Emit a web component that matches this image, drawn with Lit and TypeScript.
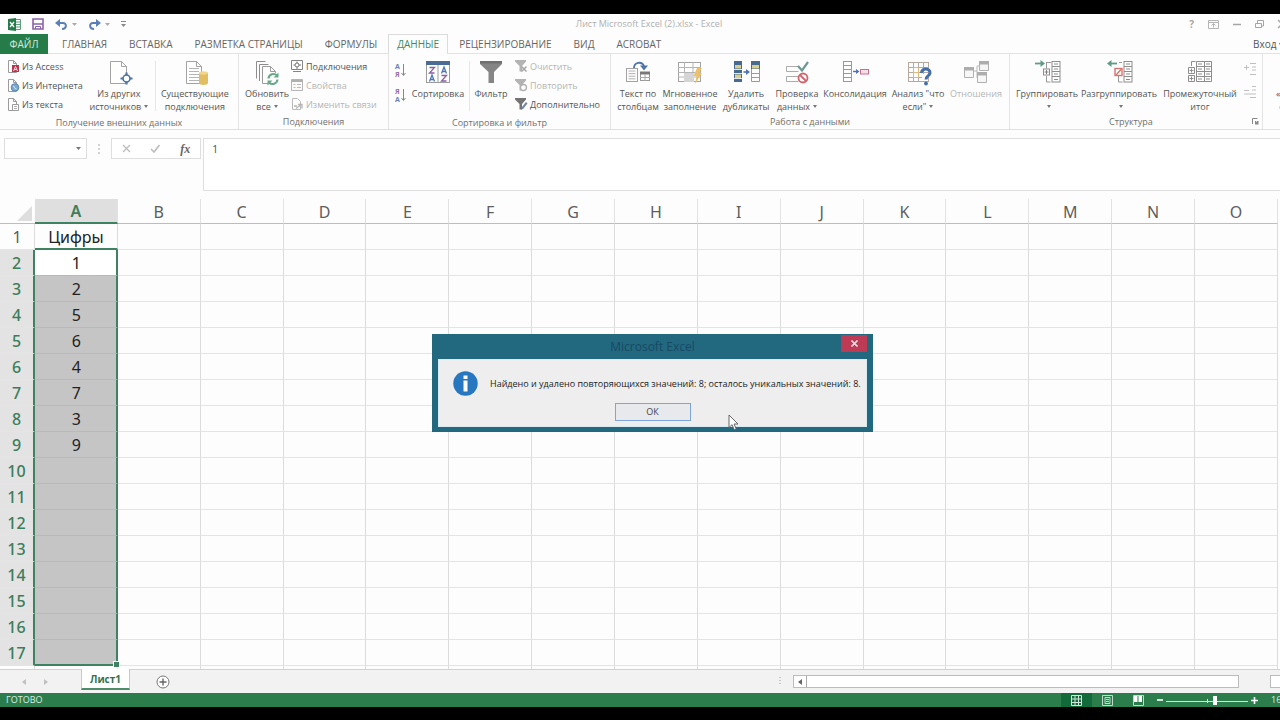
import { LitElement, html, css, svg, nothing } from "lit";
import { customElement, property } from "lit/decorators.js";
import { classMap } from "lit/directives/class-map.js";

const sheetLines = (x: number, y: number, w: number, n: number, step: number, color = "#8a8a8a") =>
  Array.from({ length: n }, (_, i) => svg`<path d="M${x} ${y + i * step}h${w}" stroke=${color}/>`);

const bigIcons: Record<string, unknown> = {
  other: svg`<path d="M3.500 .5h11l5 5v17h-16z M14.500 .5v5h5" fill="#fff" stroke="#a3a3a3"/><circle cx="19.500" cy="17.500" r="3.500" fill="#fff" stroke="#4f74a8" stroke-width="1.6"/>
    <path d="M19.500 11.500v3M19.500 20.500v3M13.500 17.500h3M22.500 17.500h3" stroke="#4f74a8" stroke-width="2.200"/>`,
  existing: svg`<path d="M3.500 .5h10l5 5v17h-15z M13.500 .5v5h5" fill="#fff" stroke="#a3a3a3"/>
    ${sheetLines(6, 7.5, 10, 5, 3, "#b5b5b5")}
    <path d="M16 12v10c0 2.600 9 2.600 9 0V12z" fill="#e3bd62"/><ellipse cx="20.500" cy="12" rx="4.500" ry="1.700" fill="#f2d68c"/>`,
  refresh: svg`<path d="M1.500 17.500V.5h9M4.500 20V3.500h9" fill="none" stroke="#8d8d8d"/>
    <path d="M7.500 5.500h8l5 5v12h-13z M15.500 5.500v5h5" fill="#fff" stroke="#9b9b9b"/>
    <circle cx="18" cy="18" r="6.500" fill="#fff"/>
    <path d="M13.500 17.500a5 5 0 0 1 8.500-3M22.500 18.500a5 5 0 0 1-8.500 3" fill="none" stroke="#69a98a" stroke-width="2.200"/>
    <path d="M23.500 11.500v5h-5zM12.500 24.500v-5h5z" fill="#69a98a"/>`,
  sort: svg`<rect x=".5" y="1" width="23" height="20.500" fill="#fff" stroke="#9c9c9c"/>
    <path d="M0 0h24v4H0z" fill="#4a6c94"/><path d="M12 4v17" stroke="#9c9c9c"/>
    <path d="M3.500 6.500h5l-5 5.500h5M15.500 14.500h5l-5 5.500h5" fill="none" stroke="#8a5fa8" stroke-width="1.300"/>
    <path d="M3.500 20.500l2.500-6.500 2.500 6.500M4.500 18.500h3M15.500 12.500l2.500-6.500 2.500 6.500M16.500 10.500h3" fill="none" stroke="#4f74b5" stroke-width="1.300"/>`,
  filter: svg`<path d="M1 0h22v3l-8 8v11H9.500V11L1 3z" fill="#858585"/><path d="M1 0h22v2.500H1z" fill="#707070"/>`,
  columns: svg`<path d="M8 7c0-6 8-7 10-2" fill="none" stroke="#4f74a8" stroke-width="1.800"/><path d="M14 4.500h8l-4 5z" fill="#4f74a8"/>
    <rect x=".5" y="7.500" width="11" height="13" fill="#fff" stroke="#a3a3a3"/>${sheetLines(2.500, 10, 7, 4, 2.600, "#b0b0b0")}
    <rect x="14.500" y="11.500" width="9" height="8" fill="#fff" stroke="#9a9a9a"/><path d="M14 10.500h10v3H14z" fill="#7a7a7a"/><path d="M14 16.500h10M19 13v7" stroke="#a8a8a8"/>`,
  flash: svg`<rect x=".5" y="1.500" width="22" height="19" fill="#fff" stroke="#a3a3a3"/>
    <path d="M0 6.500h23M0 11.500h23M0 16h23M6.500 1v20M15 1v20" stroke="#b5b5b5"/><path d="M6 12h10v9H6z" fill="#d5d5d5"/>
    <path d="M19 7h5l-3 5h3l-7 11 1.500-8H15.500z" fill="#edc069"/>`,
  duplicates: svg`<path d="M0 0h8v21H0zM17 0h9v8h-9z" fill="#486a8e"/><path d="M1 4h6v3.500H1zM1 13.500h6v4H1zM18 4h7v3.500h-7z" fill="#d8cf8a"/>
    <path d="M0 8.500h8M0 12.500h8M0 17.500h8" stroke="#dfe6ee"/>
    <path d="M17.500 8v12.500h8V8M17.500 12.500h8M17.500 16.500h8" fill="none" stroke="#9a9a9a"/>
    <path d="M9.500 11h3" stroke="#4f74b5" stroke-width="1.600"/><path d="M12 8l4 3-4 3z" fill="#4f74b5"/>`,
  validation: svg`<path d="M13 5.500H1.500v5h12M13 15.500H1.500v5h12" fill="none" stroke="#ababab"/>
    <path d="M13 5l4 4.500L23 1" fill="none" stroke="#6b9a90" stroke-width="2.200"/>
    <circle cx="18" cy="17" r="4.500" fill="#fff" stroke="#d0646c" stroke-width="1.800"/><path d="M15 14l6 6" stroke="#d0646c" stroke-width="1.800"/>`,
  consolidate: svg`<rect x=".5" y=".5" width="8" height="20" fill="#fff" stroke="#999"/><path d="M0 4.500h9M0 8.500h9M0 12.500h9M0 16.500h9" stroke="#999"/>
    <path d="M10 10.500h4" stroke="#4f74b5" stroke-width="1.400"/><path d="M13 8l3.500 2.500L13 13z" fill="#4f74b5"/>
    <rect x="17.500" y="8.500" width="8" height="4.500" fill="#f8dfe6" stroke="#c8718c"/>`,
  whatif: svg`<rect x="2.500" y="1.500" width="20" height="19" fill="#fff" stroke="#b9a79b"/>
    <path d="M2 6.500h21M2 11.500h21M2 16.500h14M7.500 1v20M12.500 1v20M17.500 1v12" stroke="#b3aaa4"/>
    <path d="M7.500 6.500h5v5h-5zM7.500 11.500h5v5h-5z" fill="none" stroke="#e6b878"/>
    <path d="M15.500 12c0-5.500 9-5 8.500 0-.5 3-4 3-4 6.500" fill="none" stroke="#456fa8" stroke-width="3"/><circle cx="20" cy="22.500" r="1.900" fill="#456fa8"/>`,
  relations: svg`<path d="M9 10h4V5h3M13 10v7h3" fill="none" stroke="#b9b9b9"/>
    <path d="M.5 7.500h9v9h-9zM15.500 1.500h9v8h-9zM13.500 12.500h9v9h-9z" fill="#f6f6f6" stroke="#b0b0b0"/>
    <path d="M0 6h10v3.500H0zM15 0h10v3.500H15zM13 11h10v3.500H13z" fill="#adadad"/>`,
  group: svg`<path d="M0 2.500h7" stroke="#5f9c84" stroke-width="1.800"/><path d="M5.500-1l4.500 3.500L5.500 6z" fill="#5f9c84"/>
    <path d="M11 1.500h5M11.500 1.500v6M11.500 15v6h4" fill="none" stroke="#999"/><rect x="8.500" y="8" width="6" height="6" fill="#fff" stroke="#8d8d8d"/><path d="M9.500 11h4M11.500 9v4" stroke="#7d7d7d"/>
    <rect x="17" y=".5" width="8" height="20.500" fill="#fff" stroke="#8d8d8d"/><path d="M17 5.500h8M17 10.500h8M17 15.500h8M19 3h4M19 8h4M19 13h4M19 18.500h4" stroke="#8d8d8d"/>`,
  ungroup: svg`<path d="M3 2.500h7" stroke="#5f9c84" stroke-width="1.800"/><path d="M4.500-1L0 2.500 4.500 6z" fill="#5f9c84"/>
    <path d="M12 1.500h3M11.500 15v6h4" fill="none" stroke="#999"/><rect x="8" y="7.500" width="7" height="7" fill="#fff" stroke="#d8756f" stroke-width="1.400"/><path d="M9 14l5.500-6" stroke="#d8756f" stroke-width="1.400"/>
    <rect x="17" y=".5" width="8" height="20.500" fill="#fff" stroke="#8d8d8d"/><path d="M17 5.500h8M17 10.500h8M17 15.500h8M19 3h4M19 8h4M19 13h4M19 18.500h4" stroke="#8d8d8d"/>`,
  subtotal: svg`<path d="M3.500 5V.5h4M.5 6.500h6v6h-6zM.5 14.500h6v6h-6zM1.500 9.500h4M3.500 7.500v4M1.500 17.500h4M3.500 15.500v4" fill="none" stroke="#8d8d8d"/>
    <path d="M8.500 .5h15v20h-15zM8.500 5.500h15M8.500 10.500h15M8.500 15.500h15M16.500 .5v20M10 3h4M18 3h4M10 8h4M18 8h4M10 13h4M18 13h4M10 18h4M18 18h4" fill="none" stroke="#8d8d8d"/>`,
  clipped: nothing,
};

const smallPage = svg`<path d="M1.500 .5h5l3 3v9h-8z M6.500 .5v3h3" fill="#fff" stroke="#9b9b9b"/>`;
const funnel = (c: string) => svg`<path d="M0 0h11v1.500L7 6v5.500H4.500V6L0 1.500z" fill=${c}/>`;
const smallIcons: Record<string, unknown> = {
  access: svg`${smallPage}<path d="M5 5h7v7H5z" fill="#b5384f"/><path d="M6.500 11L8.500 6.500 10.500 11M7.500 9.500h2" fill="none" stroke="#fff" stroke-width=".8"/>`,
  web: svg`${smallPage}<circle cx="8" cy="8.500" r="3.800" fill="#7fa9cf" stroke="#5585b5"/><path d="M6 7c2 0 1 3 3.500 3" stroke="#e8f2ea" fill="none"/>`,
  text: svg`${smallPage}<path d="M5.500 6.500h6v6h-6z" fill="#fff" stroke="#9b9b9b"/><path d="M7 8.500h3M7 10.500h3" stroke="#9b9b9b" stroke-width=".8"/>`,
  connections: svg`<path d="M.5 .5h11v9H.5z" fill="#fff" stroke="#858585"/><path d="M2 11.500h8" stroke="#858585"/><circle cx="6" cy="5" r="2" fill="none" stroke="#777"/><path d="M6 1.500v1.500M6 7v2M2.500 5H4M8 5h2" stroke="#777"/>`,
  properties: svg`<path d="M.5 .5h11v11H.5z" fill="#fafafa" stroke="#b5b5b5"/><path d="M0 2h12" stroke="#b0b0b0" stroke-width="2"/><path d="M2.500 5.500h2M6 5.500h4M2.500 8.500h2M6 8.500h4" stroke="#bbb"/>`,
  links: svg`<path d="M1.500 .5h5l3 3v8h-8z" fill="#fff" stroke="#bbb"/><path d="M3 8h3M5 10.500l4-3M7 6.500h4v4" stroke="#b5b5b5" stroke-width="1.300" fill="none"/>`,
  clear: svg`${funnel("#b3b3b3")}<path d="M6.500 6.500l5 5M11.500 6.500l-5 5" stroke="#a5a5a5" stroke-width="1.500"/>`,
  reapply: svg`${funnel("#b3b3b3")}<circle cx="8.500" cy="8.500" r="3" fill="#fdfdfd" stroke="#b0b0b0" stroke-width="1.300"/>`,
  advanced: svg`${funnel("#747474")}<path d="M6 12l1-3 4-5 1.500 1.500-4 5z" fill="#7484a3"/>`,
};

@customElement("big-command")
export class BigCommand extends LitElement {
  static styles = css`
    :host { display: block; flex: none; }
    button { display: flex; flex-direction: column; align-items: center; width: 100%; padding: 4px 0 0; border: 0; background: none;
      font: 9px/13px "Open Sans", sans-serif; color: #555; white-space: nowrap; }
    button:disabled { color: #b5b5b5; }
    svg { display: block; width: 26px; height: 26px; overflow: visible; }
    .lines { display: flex; flex-direction: column; align-items: center; }
    .arrow { display: inline-block; margin-left: 3px; vertical-align: 2px; border: 2px solid transparent; border-top: 3px solid #777; border-bottom: 0; }
  `;
  @property() icon = "";
  @property({ type: Array }) lines: string[] = [];
  @property({ type: Boolean }) menu = false;
  @property({ type: Boolean }) off = false;
  render() {
    const last = this.lines.length - 1;
    return html`<button ?disabled=${this.off}>
      <svg viewBox="-1 0 26 26" aria-hidden="true">${bigIcons[this.icon]}</svg>
      <span class="lines">${this.lines.map((t, i) => html`<span>${t}${this.menu && i === last ? html`<i class="arrow"></i>` : nothing}</span>`)}</span>
    </button>`;
  }
}

@customElement("small-command")
export class SmallCommand extends LitElement {
  static styles = css`
    :host { display: block; }
    button { display: flex; align-items: center; gap: 2px; height: 19px; padding: 0; border: 0; background: none;
      font: 9px/19px "Open Sans", sans-serif; color: #555; white-space: nowrap; }
    button:disabled { color: #b5b5b5; }
    svg { width: 13px; height: 13px; flex: none; }
  `;
  @property() icon = "";
  @property() label = "";
  @property({ type: Boolean }) off = false;
  render() {
    return html`<button ?disabled=${this.off}><svg viewBox="0 0 13 13" aria-hidden="true">${smallIcons[this.icon]}</svg>${this.label}</button>`;
  }
}

const COLUMNS = "ABCDEFGHIJKLMNO".split("");
const VALUES = ["Цифры", "1", "2", "5", "6", "4", "7", "3", "9"];
const TABS = ["ГЛАВНАЯ", "ВСТАВКА", "РАЗМЕТКА СТРАНИЦЫ", "ФОРМУЛЫ", "ДАННЫЕ", "РЕЦЕНЗИРОВАНИЕ", "ВИД", "ACROBAT"];

@customElement("app-root")
export class AppRoot extends LitElement {
  static styles = css`
    :host { display: block; font: 9px/14px "Open Sans", sans-serif; color: #5c5c5c; }
    * { box-sizing: border-box; }
    button, input { font: inherit; color: inherit; }
    button { padding: 0; border: 0; background: none; }
    svg { display: block; overflow: visible; }
    .screen { display: flex; flex-direction: column; min-height: 100vh; border-top: 14px solid #000; border-bottom: 13px solid #000; background: #fdfdfd; overflow: hidden; position: relative; }

    .titlebar { display: grid; grid-template-columns: 1fr auto 1fr; align-items: center; height: 20px; padding-left: 8px; }
    .quick { display: flex; align-items: center; gap: 11px; }
    .quick .history { display: flex; align-items: center; gap: 4px; }
    .caption { color: #b0b0b0; padding-left: 10px; }
    .window { display: flex; justify-content: flex-end; align-items: center; gap: 14px; color: #a5a5a5; font-size: 10px; margin-right: -6px; }

    .tabs { display: flex; height: 20px; border-bottom: 1px solid #e3e3e3; }
    .tab { height: 20px; padding: 0 11px; font-size: 10px; line-height: 20px; color: #666; white-space: nowrap; }
    .file { width: 48px; padding: 0; margin-right: 3px; background: #257c49; color: #d5e8dc; }
    .active { padding: 0 8px; border: 1px solid #dcdcdc; border-bottom: 0; background: #fdfdfd; color: #3f8a62; line-height: 19px; }
    .signin { margin-left: auto; margin-right: -4px; font-size: 10px; line-height: 20px; color: #555; white-space: nowrap; }

    .ribbon { display: flex; height: 76px; border-bottom: 1px solid #e0e0e0; overflow: hidden; }
    .group { display: flex; flex-direction: column; flex: none; border-right: 1px solid #e4e4e4; }
    .body { display: flex; flex: 1; padding: 3px 0 0 4px; }
    .name { display: flex; justify-content: center; height: 15px; line-height: 15px; color: #707070; }
    .name .launcher { margin-left: auto; padding-right: 3px; }
    .name.wide { padding-left: 99px; }
    .g-external { width: 239px; } .g-links { width: 150px; } .g-sort { width: 222px; } .g-tools { width: 399px; } .g-outline { width: 253px; } .g-more { border: 0; }
    .stack { padding-left: 3px; flex: none; }
    .stack.tight { padding-left: 0; }
    .rule { width: 1px; height: 50px; background: #e6e6e6; margin: 4px 0; }
    .order { display: flex; flex-direction: column; gap: 11px; padding: 6px 0 0 2px; }
    .w42 { width: 42px; } .w46 { width: 46px; } .w48 { width: 48px; } .w54 { width: 54px; } .w58 { width: 58px; } .w62 { width: 62px; } .w66 { width: 66px; } .w68 { width: 68px; } .w72 { width: 72px; } .w78 { width: 78px; } .w84 { width: 84px; }

    .formula { display: flex; align-items: flex-start; height: 69px; padding: 8px 0 0 4px; }
    .namebox { display: flex; align-items: center; width: 83px; height: 21px; border: 1px solid #dedede; background: #fff; }
    .namebox input { flex: 1; min-width: 0; border: 0; outline: 0; background: none; padding: 0 4px; }
    .namebox button { width: 16px; height: 19px; display: grid; place-items: center; }
    .grip { width: 24px; display: grid; place-items: center; height: 21px; }
    .fx { display: flex; justify-content: space-around; align-items: center; width: 90px; height: 21px; margin-right: 2px; border: 1px solid #dedede; background: #fff; }
    .fxmark { font: italic bold 12px/18px "Liberation Serif", serif; color: #666; }
    .entry { flex: 1; min-width: 0; height: 53px; padding: 3px 8px; border: 1px solid #dedede; border-right: 0; border-radius: 0; outline: 0; resize: none; background: #fff; font: 11px/14px "Open Sans", sans-serif; color: #555; display: block; overflow: hidden; }

    .sheet { flex: 1; padding-right: 2px; position: relative; overflow: hidden; }
    table { width: 100%; table-layout: fixed; border-collapse: separate; border-spacing: 0; font: 16px/22px "Noto Sans", sans-serif; color: #222; }
    th, td { height: 26px; padding: 1px 0 0; border-right: 1px solid #dcdcdc; border-bottom: 1px solid #e4e4e4; text-align: center; overflow: hidden; }
    th { font-weight: 400; color: #5e5e5e; }
    thead th { height: 25px; font-size: 16px; line-height: 22px; border-bottom: 1px solid #bdbdbd; border-right-color: #e2e2e2; }
    .corner { width: 35px; border-right: 0; }
    .corner svg { margin: 4px 0 0 16px; }
    thead th.on { background: #dfdfdf; color: #3c7d5b; font-weight: 600; border-bottom: 2px solid #3f8261; }
    tbody th.on { background: #e3e3e3; color: #3c7d5b; font-weight: 500; border-right: 2px solid #3f8261; }
    td.above { border-bottom: 2px solid #3f8261; }
    td.pick { padding-left: 2px; border-right: 2px solid #3f8261; background: #c5c5c5; border-bottom-color: #b9b9b9; }
    td.pick.cursor { background: #fff; }
    td.pick.end { border-bottom: 2px solid #3f8261; position: relative; overflow: visible; }
    .handle { position: absolute; right: -3px; bottom: -3px; width: 5px; height: 5px; background: #3f8261; outline: 1px solid #fdfdfd; }
    .rest td, .rest th { height: 3px; padding: 0; border-bottom: 0; line-height: 0; }

    .sheets { display: flex; height: 24px; background: #f2f2f2; border-top: 1px solid #d2d2d2; align-items: center; }
    .nav { display: flex; gap: 18px; width: 81px; padding-left: 22px; }
    .sheettab { align-self: flex-start; width: 49px; height: 21px; margin-top: -1px; background: #fff; border: 1px solid #c9c9c9; border-top: 0; border-bottom: 2px solid #4e8b69; color: #2f7350; font-size: 10px; font-weight: 700; line-height: 20px; }
    .add { margin-left: 26px; }
    .hscroll { display: flex; align-items: center; margin-left: auto; width: 501px; height: 23px; }
    .thumbbar { display: flex; flex: 1; height: 13px; margin-left: 12px; border: 1px solid #bcbcbc; background: #fff; }
    .thumbbar button { width: 13px; border-right: 1px solid #aaa; display: grid; place-items: center; }
    .vend { width: 10px; height: 13px; margin-left: 31px; border: 1px solid #bcbcbc; border-right: 0; background: #fff; }

    .status { display: flex; align-items: center; height: 14px; background: #2b7d4c; color: #dcece2; padding-left: 6px; }
    .status .views { display: flex; margin-left: auto; }
    .view { display: grid; place-items: center; width: 31px; height: 14px; }
    .view.on { background: #12693a; }
    .zoom { display: flex; align-items: center; gap: 3px; padding-left: 3px; }
    .zoom input { appearance: none; width: 82px; height: 13px; margin: 0; background: linear-gradient(#cfe3d7, #cfe3d7) 41px 5px / 1px 4px no-repeat, linear-gradient(#cfe3d7, #cfe3d7) 0 7px / 100% 1px no-repeat; }
    .zoom input::-webkit-slider-thumb { appearance: none; width: 4px; height: 9px; background: #fff; }
    .percent { flex: none; width: 22px; padding-left: 13px; overflow: hidden; white-space: nowrap; }

    .dialog { position: absolute; left: 432px; top: 320px; width: 441px; padding: 0 6px 5px; background: #22687f; border: 0; }
    .dtitle { display: grid; grid-template-columns: 1fr auto 1fr; height: 25px; color: #174a63; font: 12px/25px "Open Sans", sans-serif; }
    .dtitle strong { grid-column: 2; font-weight: 400; }
    .close { justify-self: end; width: 26px; height: 17px; margin-top: 1px; background: #bd3b55; display: grid; place-items: center; }
    .message { display: flex; flex-direction: column; align-items: center; height: 68px; background: #eeeeee; border: 1px solid #d9eaf2; }
    .line { display: flex; align-items: center; align-self: stretch; gap: 12px; height: 43px; padding: 4px 0 0 14px; color: #222; white-space: nowrap; }
    .ok { width: 76px; height: 18px; border: 1px solid #7fa6d6; background: #e8e9ed; color: #444; line-height: 16px; }
    .pointer { position: absolute; left: 296px; top: 80px; }
  `;

  big(width: string, icon: string, lines: string[], menu = false, off = false) {
    return html`<big-command class=${width} .icon=${icon} .lines=${lines} .menu=${menu} .off=${off}></big-command>`;
  }
  small(icon: string, label: string, off = false) {
    return html`<small-command .icon=${icon} .label=${label} .off=${off}></small-command>`;
  }
  caret(color = "#888") {
    return html`<svg width="5" height="3" aria-hidden="true"><path d="M0 0h5L2.500 3z" fill=${color} /></svg>`;
  }

  titlebar() {
    return html`<header class="titlebar">
      <div class="quick">
        <svg width="13" height="13" aria-hidden="true"><path d="M6 1.500h6.500v10H6z" fill="#fff" stroke="#5d9c7a"/><path d="M8 4h4M8 6.500h4M8 9h4" stroke="#5d9c7a"/><path d="M0 1l8-1v13l-8-1z" fill="#257c49"/><path d="M2 4l4 5M6 4L2 9" stroke="#fff" stroke-width="1.300"/></svg>
        <button aria-label="Сохранить"><svg width="12" height="12"><path d="M1 1h10v10H1z" fill="#fff" stroke="#8a62a8" stroke-width="1.600"/><path d="M1 6h10" stroke="#8a62a8" stroke-width="1.500"/><path d="M3.500 11V8.500h5V11" fill="none" stroke="#8a62a8"/></svg></button>
        <span class="history"><button aria-label="Отменить"><svg width="13" height="11"><path d="M3 4h5c4 0 4 6-1 6" fill="none" stroke="#5a7fb8" stroke-width="2"/><path d="M5 0v8L0 4z" fill="#5a7fb8"/></svg></button>${this.caret("#aaa")}</span>
        <span class="history"><button aria-label="Вернуть"><svg width="13" height="11"><path d="M10 4H5C1 4 1 10 6 10" fill="none" stroke="#5a7fb8" stroke-width="2"/><path d="M8 0v8l5-4z" fill="#5a7fb8"/></svg></button>${this.caret("#aaa")}</span>
        <svg width="5" height="6" aria-hidden="true"><path d="M0 .5h5" stroke="#888"/><path d="M0 3h5L2.500 6z" fill="#888"/></svg>
      </div>
      <span class="caption">Лист Microsoft Excel (2).xlsx - Excel</span>
      <div class="window">
        <button aria-label="Справка"><b>?</b></button>
        <button aria-label="Параметры ленты"><svg width="11" height="9"><path d="M.5 .5h10v8H.5zM0 2.500h11M5.500 7.500V4M3.500 5.500l2-2 2 2" fill="none" stroke="#b5b5b5"/></svg></button>
        <button aria-label="Свернуть"><svg width="8" height="3"><path d="M0 1.500h8" stroke="#a5a5a5" stroke-width="1.500"/></svg></button>
        <button aria-label="Восстановить"><svg width="9" height="8"><path d="M.5 3.500h6v4h-6zM2.500 3V.500h6V6H7" fill="none" stroke="#a5a5a5"/></svg></button>
        <button aria-label="Закрыть"><svg width="8" height="8"><path d="M0 0l8 8M8 0L0 8" stroke="#a5a5a5" stroke-width="1.300"/></svg></button>
      </div>
    </header>`;
  }

  ribbon() {
    const letters = (top: string, bottom: string, c1: string, c2: string) => html`<button aria-label="Сортировка ${top}${bottom}">
      <svg width="12" height="14"><text x="0" y="6" font-size="7" font-weight="700" fill=${c1}>${top}</text><text x="0" y="14" font-size="7" font-weight="700" fill=${c2}>${bottom}</text><path d="M8.500 1v11M6.500 10l2 2.500 2-2.500" fill="none" stroke="#888"/></svg></button>`;
    return html`<div class="ribbon">
      <section class="group g-external"><div class="body">
        <div class="stack">${this.small("access", "Из Access")}${this.small("web", "Из Интернета")}${this.small("text", "Из текста")}</div>
        ${this.big("w72", "other", ["Из других", "источников"], true)}<span class="rule"></span>${this.big("w78", "existing", ["Существующие", "подключения"])}
      </div><div class="name">Получение внешних данных</div></section>
      <section class="group g-links"><div class="body">
        ${this.big("w48", "refresh", ["Обновить", "все"], true)}
        <div class="stack tight">${this.small("connections", "Подключения")}${this.small("properties", "Свойства", true)}${this.small("links", "Изменить связи", true)}</div>
      </div><div class="name">Подключения</div></section>
      <section class="group g-sort"><div class="body">
        <div class="order">${letters("А", "Я", "#6b7fb8", "#9a6fa8")}${letters("Я", "А", "#9a6fa8", "#6b7fb8")}</div>
        ${this.big("w62", "sort", ["Сортировка"])}<span class="rule"></span>${this.big("w42", "filter", ["Фильтр"])}
        <div class="stack">${this.small("clear", "Очистить", true)}${this.small("reapply", "Повторить", true)}${this.small("advanced", "Дополнительно")}</div>
      </div><div class="name">Сортировка и фильтр</div></section>
      <section class="group g-tools"><div class="body">
        ${this.big("w46", "columns", ["Текст по", "столбцам"])}${this.big("w58", "flash", ["Мгновенное", "заполнение"])}
        ${this.big("w54", "duplicates", ["Удалить", "дубликаты"])}${this.big("w48", "validation", ["Проверка", "данных"], true)}
        ${this.big("w68", "consolidate", ["Консолидация"])}${this.big("w58", "whatif", ["Анализ \"что", "если\""], true)}
        ${this.big("w58", "relations", ["Отношения"], false, true)}
      </div><div class="name">Работа с данными</div></section>
      <section class="group g-outline"><div class="body">
        ${this.big("w66", "group", ["Группировать", ""], true)}${this.big("w78", "ungroup", ["Разгруппировать", ""], true)}${this.big("w84", "subtotal", ["Промежуточный", "итог"])}
        <div class="order"><button disabled aria-label="Показать детали"><svg width="12" height="12"><path d="M0 4.500h5M2.500 2v5M6 .5h6M8 4h4M8 7h4M6 11.500h6" fill="none" stroke="#c0c0c0"/></svg></button>
          <button disabled aria-label="Скрыть детали"><svg width="12" height="12"><path d="M0 4.500h5M8 .5h4M8 4h4M0 8h12M6 11.500h6" fill="none" stroke="#c0c0c0"/></svg></button></div>
      </div><div class="name wide">Структура<button class="launcher" aria-label="Параметры структуры"><svg width="7" height="7"><path d="M.5 6V.500h5" fill="none" stroke="#888"/><path d="M3 3h1l1 1.500V3h1.500v3.500H3z" fill="#888"/></svg></button></div></section>
      <section class="group g-more"><div class="body">${this.big("w54", "clipped", ["«Анализ", "связей"])}</div></section>
    </div>`;
  }

  grid() {
    return html`<main class="sheet"><table>
      <thead><tr><th class="corner"><svg width="16" height="16" aria-hidden="true"><path d="M16 0v15H1z" fill="#dedede"/></svg></th>
        ${COLUMNS.map((c) => html`<th scope="col" class=${classMap({ on: c === "A" })}>${c}</th>`)}</tr></thead>
      <tbody>${Array.from({ length: 17 }, (_, r) => html`<tr>
        <th scope="row" class=${classMap({ on: r > 0 })}>${r + 1}</th>
        ${COLUMNS.map((c, i) => i === 0
          ? html`<td class=${classMap({ above: r === 0, pick: r > 0, cursor: r === 1, end: r === 16 })}>${VALUES[r] ?? ""}${r === 16 ? html`<span class="handle"></span>` : nothing}</td>`
          : html`<td></td>`)}</tr>`)}
        <tr class="rest"><th></th>${COLUMNS.map(() => html`<td></td>`)}</tr>
      </tbody></table></main>`;
  }

  render() {
    return html`<div class="screen">
      ${this.titlebar()}
      <nav class="tabs"><button class="tab file">ФАЙЛ</button>
        ${TABS.map((t) => html`<button class=${classMap({ tab: true, active: t === "ДАННЫЕ" })}>${t}</button>`)}
        <button class="signin">Вход ▾</button></nav>
      ${this.ribbon()}
      <div class="formula">
        <div class="namebox"><input aria-label="Имя" /><button aria-label="Список имён">${this.caret("#777")}</button></div>
        <span class="grip"><svg width="2" height="10"><path d="M1 0v10" stroke="#aaa" stroke-dasharray="2 2"/></svg></span>
        <div class="fx">
          <button aria-label="Отмена"><svg width="9" height="9"><path d="M1 1l7 7M8 1L1 8" stroke="#bdbdbd" stroke-width="1.300"/></svg></button>
          <button aria-label="Ввод"><svg width="10" height="9"><path d="M1 5l3 3 5.500-7" fill="none" stroke="#bdbdbd" stroke-width="1.600"/></svg></button>
          <button class="fxmark" aria-label="Вставить функцию">fx</button>
        </div>
        <textarea class="entry" aria-label="Строка формул" .value=${"1"}></textarea>
      </div>
      ${this.grid()}
      <div class="sheets">
        <div class="nav"><svg width="4" height="6"><path d="M4 0v6L0 3z" fill="#c0c0c0"/></svg><svg width="4" height="6"><path d="M0 0v6l4-3z" fill="#c0c0c0"/></svg></div>
        <button class="sheettab">Лист1</button>
        <button class="add" aria-label="Новый лист"><svg width="14" height="14"><circle cx="7" cy="7" r="6" fill="#fff" stroke="#777"/><path d="M3.500 7h7M7 3.500v7" stroke="#666" stroke-width="1.400"/></svg></button>
        <div class="hscroll"><svg width="2" height="9"><path d="M1 0v9" stroke="#999" stroke-dasharray="1 2"/></svg>
          <div class="thumbbar"><button aria-label="Влево"><svg width="4" height="6"><path d="M4 0v6L0 3z" fill="#666"/></svg></button></div><div class="vend"></div></div>
      </div>
      <footer class="status"><span>ГОТОВО</span>
        <div class="views">
          <button class="view on" aria-label="Обычный"><svg width="11" height="11"><path d="M.5 .5h10v10H.5zM0 4h11M0 7.500h11M4 0v11M7.500 0v11" fill="none" stroke="#cfe6d8"/></svg></button>
          <button class="view" aria-label="Разметка страницы"><svg width="11" height="11"><path d="M.5 .5h10v10H.5zM3 2.500h5v6H3zM4 4.500h3M4 6.500h3" fill="none" stroke="#bfdccb"/></svg></button>
          <button class="view" aria-label="Страничный режим"><svg width="11" height="11"><path d="M.5 .5h10v10H.5z" fill="none" stroke="#bfdccb"/><path d="M1 1h3.500v6H1zM5.500 1H9v6H5.500z" fill="#fff"/></svg></button>
        </div>
        <div class="zoom"><button aria-label="Уменьшить"><svg width="6" height="6"><path d="M0 3h6" stroke="#fff" stroke-width="1.600"/></svg></button>
          <input type="range" min="0" max="100" value="60" aria-label="Масштаб" />
          <button aria-label="Увеличить"><svg width="7" height="7"><path d="M0 3.500h7M3.500 0v7" stroke="#fff" stroke-width="1.600"/></svg></button></div>
        <span class="percent">160%</span>
      </footer>
      <div class="dialog" role="dialog" aria-label="Microsoft Excel">
        <div class="dtitle"><strong>Microsoft Excel</strong><button class="close" aria-label="Закрыть"><svg width="7" height="7"><path d="M.5 .5l6 6M6.500 .5l-6 6" stroke="#f5dfe4" stroke-width="1.700"/></svg></button></div>
        <div class="message"><div class="line">
          <svg width="25" height="25" aria-hidden="true"><circle cx="12.500" cy="12.500" r="12.200" fill="#2676c0"/><path d="M10.500 9.500h4v11h-4z" fill="#fff"/><path d="M10.500 4.500h4v3.500h-4z" fill="#fff"/></svg>
          <span>Найдено и удалено повторяющихся значений: 8; осталось уникальных значений: 8.</span></div>
          <button class="ok">ОК</button></div>
        <svg class="pointer" width="11" height="17" aria-hidden="true"><path d="M1 1v12.500l3-2.800 2.200 5 2-1-2.200-4.700h4z" fill="#fff" stroke="#666"/></svg>
      </div>
    </div>`;
  }
}
